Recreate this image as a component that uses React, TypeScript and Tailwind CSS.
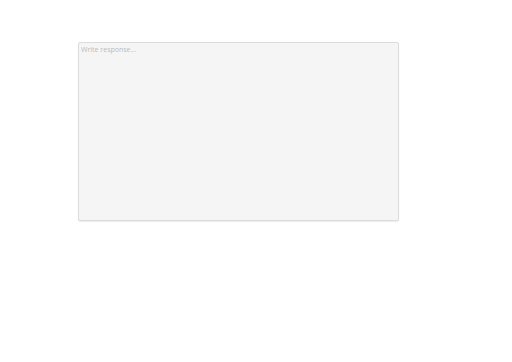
export default function App() {
  return (
    <div className="w-[512px] h-[362px] bg-white pt-[42px] pl-[78px]">
      <textarea
        placeholder="Write response..."
        className="block w-[321px] h-[179px] resize-none bg-[#f5f5f5] border border-[#dcdcdc] rounded-[2px] shadow-[0_1px_1px_rgba(0,0,0,0.08)] px-[2px] pt-[2px] text-[7px] leading-[10px] text-[#555] placeholder:text-[#bbbbbb] outline-none"
        style={{ fontFamily: '"Open Sans", sans-serif' }}
      />
    </div>
  );
}
